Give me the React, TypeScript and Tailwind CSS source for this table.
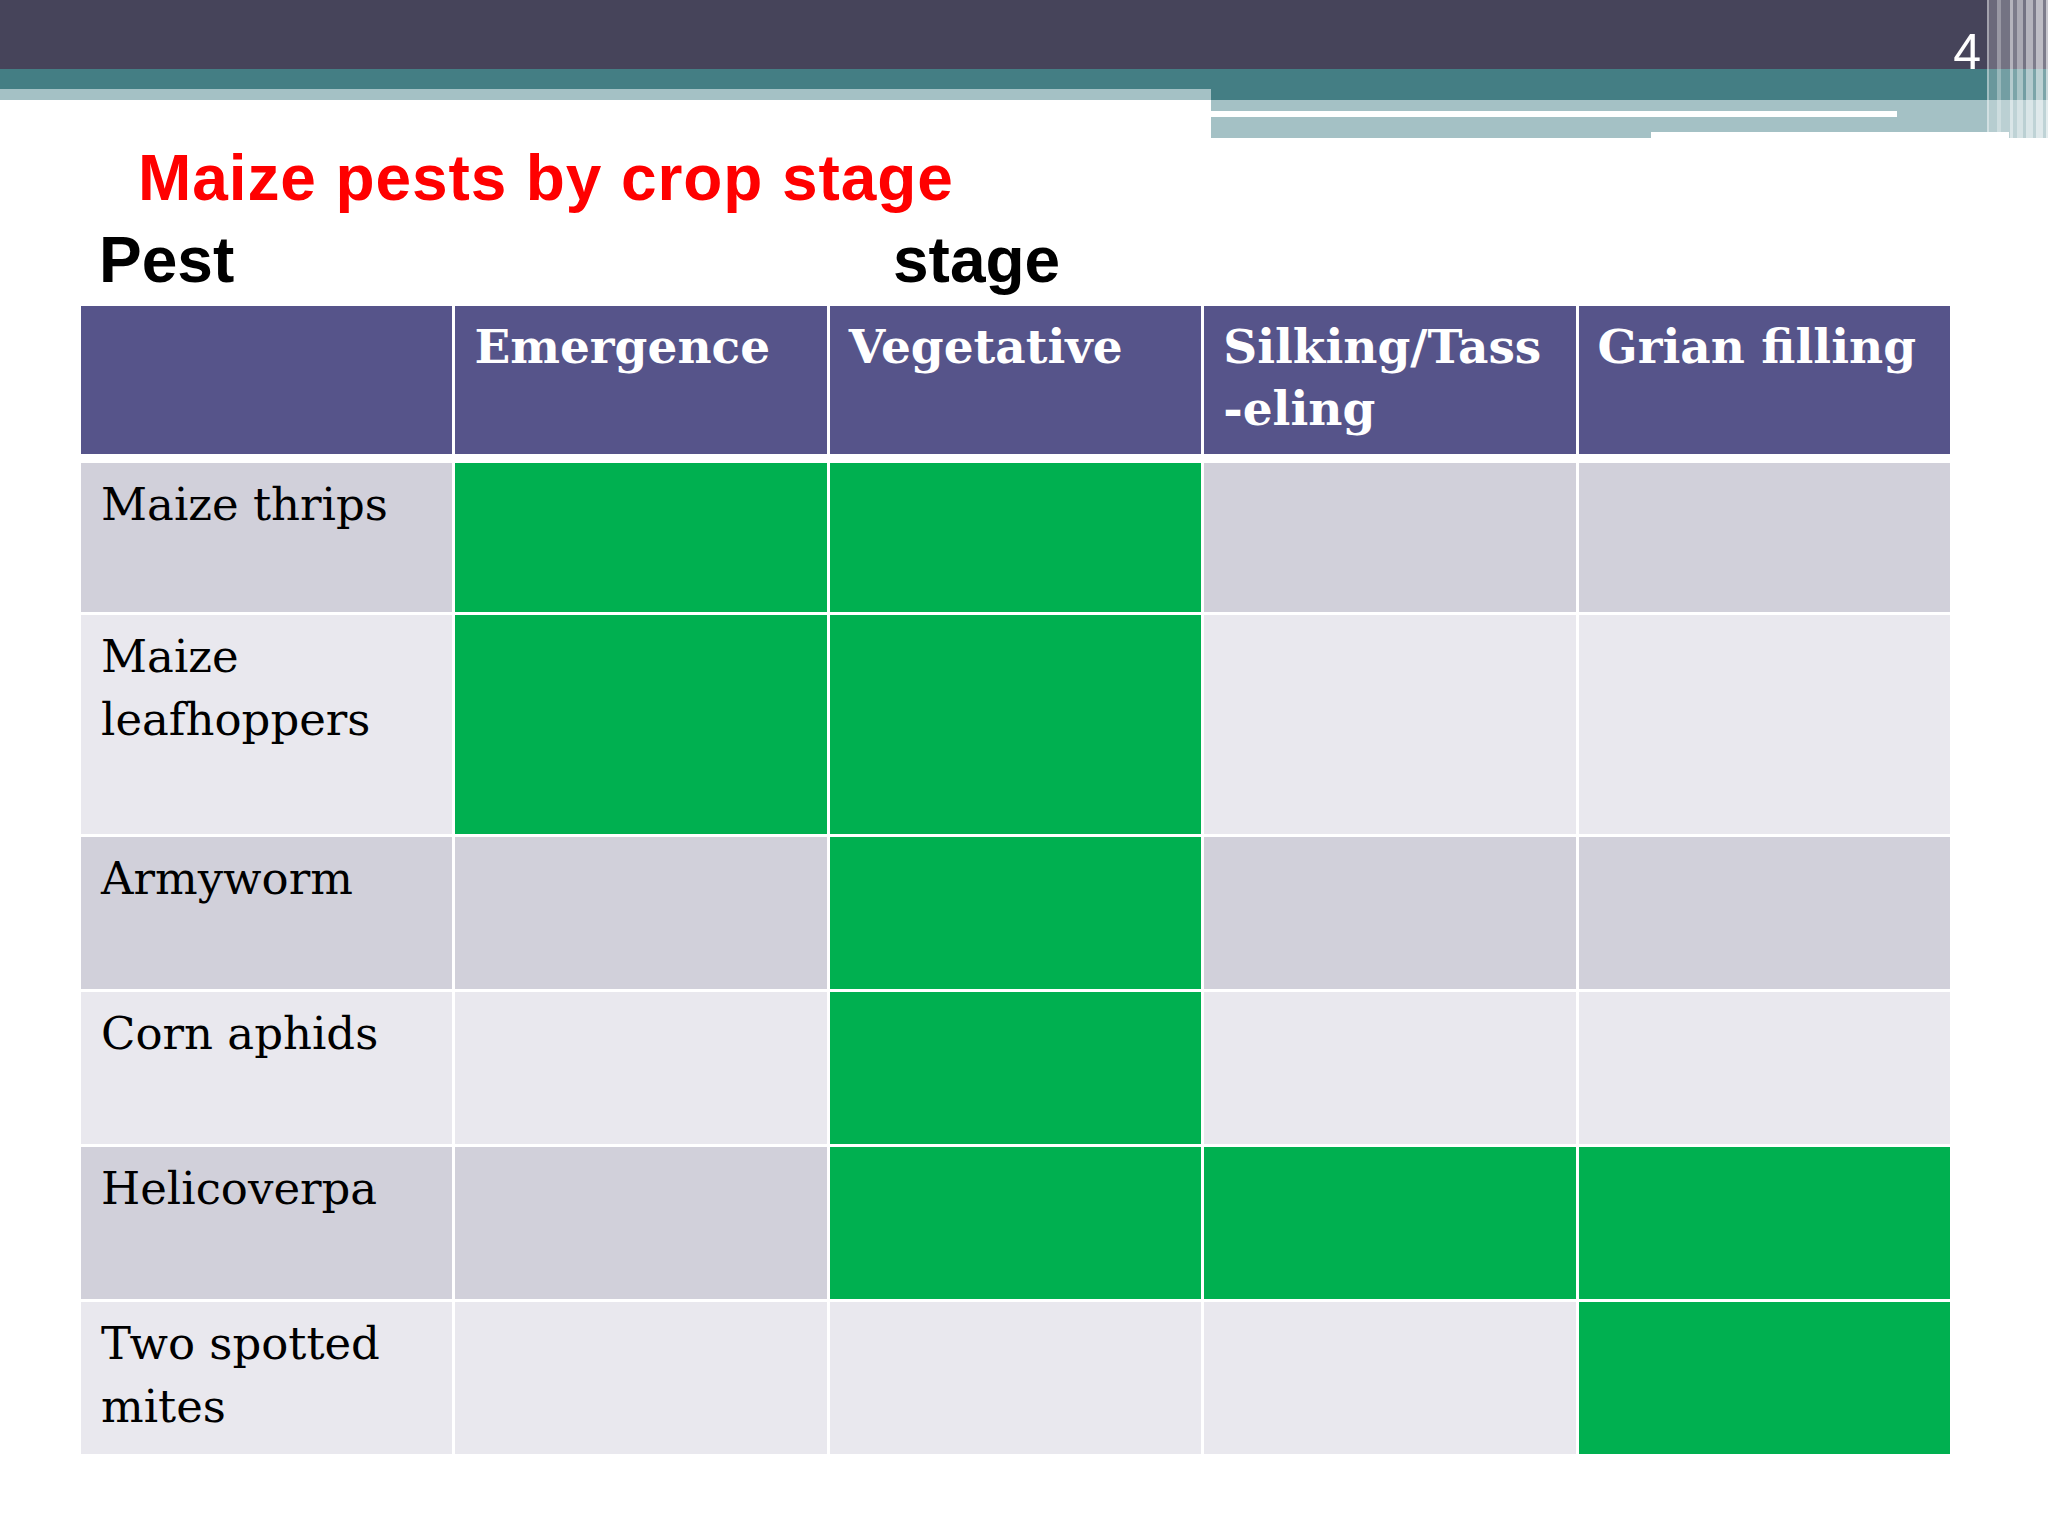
import React from 'react'

const stages = ['Emergence', 'Vegetative', 'Silking/Tass\n-eling', 'Grian filling']

const pests = [
  { name: 'Maize thrips', hits: [1, 1, 0, 0], h: 'h-[149px]' },
  { name: 'Maize leafhoppers', hits: [1, 1, 0, 0], h: 'h-[219px]' },
  { name: 'Armyworm', hits: [0, 1, 0, 0], h: 'h-[152px]' },
  { name: 'Corn aphids', hits: [0, 1, 0, 0], h: 'h-[152px]' },
  { name: 'Helicoverpa', hits: [0, 1, 1, 1], h: 'h-[152px]' },
  { name: 'Two spotted mites', hits: [0, 0, 0, 1], h: 'h-[152px]' },
]

// right-edge stripes of the slide theme
const stripes = [
  { x: 0, w: 2, o: 0.5 },
  { x: 2, w: 8, o: 0.2 },
  { x: 10, w: 4, o: 0.45 },
  { x: 14, w: 9, o: 0.25 },
  { x: 23, w: 3, o: 0.6 },
  { x: 26, w: 4, o: 0.3 },
  { x: 30, w: 6, o: 0.55 },
  { x: 36, w: 3, o: 0.25 },
  { x: 39, w: 7, o: 0.6 },
  { x: 46, w: 3, o: 0.3 },
  { x: 49, w: 7, o: 0.65 },
  { x: 56, w: 3, o: 0.3 },
  { x: 59, w: 2, o: 0.7 },
]

function ThemeBar() {
  return (
    <div className="relative h-[138px]">
      <div className="h-[69px] bg-[#46445a] flex justify-end pr-[67px]">
        <span className="pt-[27px] text-[50px] leading-none font-light text-white font-['Liberation_Sans',sans-serif]">4</span>
      </div>
      <div className="flex">
        <div className="w-[1211px]">
          <div className="h-[20px] bg-[#447e84]" />
          <div className="h-[11px] bg-[#a4c1c5]" />
        </div>
        <div className="flex-1">
          <div className="h-[31px] bg-[#447e84]" />
          <div className="h-[11px] bg-[#a4c1c5]" />
          <div className="flex h-[6px]">
            <div className="w-[686px] bg-white" />
            <div className="flex-1 bg-[#a4c1c5]" />
          </div>
          <div className="h-[15px] bg-[#a4c1c5]" />
          <div className="flex h-[6px]">
            <div className="w-[440px] bg-[#a4c1c5]" />
            <div className="w-[358px] bg-white" />
            <div className="flex-1 bg-[#a4c1c5]" />
          </div>
        </div>
      </div>
      <svg className="absolute right-0 top-0" width="61" height="138" viewBox="0 0 61 138">
        {stripes.map((s, i) => (
          <rect key={i} x={s.x} y={0} width={s.w} height={138} fill="#ffffff" fillOpacity={s.o} />
        ))}
      </svg>
    </div>
  )
}

export default function App() {
  return (
    <div className="w-[2048px] h-[1536px] bg-white overflow-hidden">
      <ThemeBar />

      <div className="pl-[138px] mt-[8px]">
        <h1 className="text-[64px] leading-none font-bold tracking-[0.9px] text-[#ff0000] font-['Liberation_Sans',sans-serif]">
          Maize pests by crop stage
        </h1>
      </div>
      <div className="flex mt-[18px] pl-[99px] text-[64px] leading-none font-bold text-black font-['Liberation_Sans',sans-serif]">
        <span className="w-[794px]">Pest</span>
        <span>stage</span>
      </div>

      <div className="mt-[14px] ml-[81px] w-[1869px] font-['DejaVu_Serif',serif]">
        <div className="grid grid-cols-5 gap-x-[3px] h-[148px]">
          <div className="bg-[#56548a]" />
          {stages.map((s) => (
            <div key={s} className="bg-[#56548a] pt-[10px] pl-[19px] text-[47px] leading-[62px] font-bold text-white whitespace-pre">
              {s}
            </div>
          ))}
        </div>

        <div className="mt-[9px] flex flex-col gap-y-[3px]">
          {pests.map((p, r) => {
            const base = r % 2 === 0 ? 'bg-[#d1d0da]' : 'bg-[#e9e8ee]'
            return (
              <div key={p.name} className={`grid grid-cols-5 gap-x-[3px] ${p.h}`}>
                <div className={`${base} pt-[10px] pl-[20px] pr-[10px] text-[45px] leading-[63px] text-black`}>{p.name}</div>
                {p.hits.map((hit, c) => (
                  <div key={c} className={hit ? 'bg-[#00b050]' : base} />
                ))}
              </div>
            )
          })}
        </div>
      </div>
    </div>
  )
}
